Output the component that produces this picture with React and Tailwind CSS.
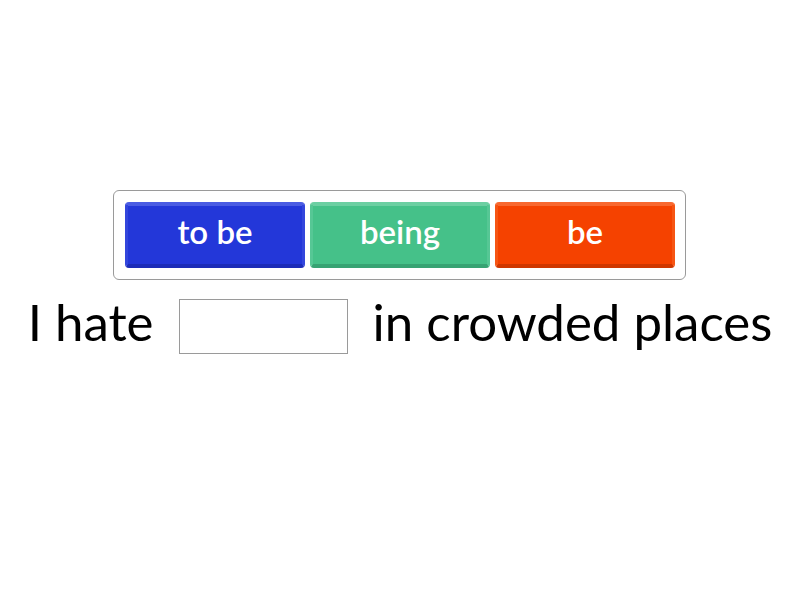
export default function App() {
  const words = [
    { label: 'to be', cls: 'bg-[#2337d9] border-t-[#4a5ce3] border-x-[#3346dc] border-b-[#1c2cb8]' },
    { label: 'being', cls: 'bg-[#45c189] border-t-[#6ccfa2] border-x-[#56c795] border-b-[#37a373]' },
    { label: 'be', cls: 'bg-[#f54200] border-t-[#f8682f] border-x-[#f65514] border-b-[#cf3700]' },
  ]

  return (
    <div className="w-[800px] h-[600px] bg-white flex flex-col items-center pt-[190px]" style={{ fontFamily: 'Lato, "Noto Sans", sans-serif' }}>
      <div className="flex gap-[5px] pt-[11px] pb-[11px] pl-[11px] pr-[10px] border border-[#9a9a9a] rounded-[6px] ml-[-1px]">
        {words.map((w) => (
          <div
            key={w.label}
            className={`w-[180px] h-[66px] rounded-[4px] border-t-[4px] border-x-[3px] border-b-[4px] flex items-center justify-center text-white text-[33px] font-semibold ${w.cls}`}
          >
            <span className="-mt-[6px]">{w.label}</span>
          </div>
        ))}
      </div>
      <div className="flex items-center mt-[19px] text-[51px] text-black leading-none">
        <span className="-mt-[10px]">I hate</span>
        <div className="w-[169px] h-[55px] border border-[#9a9a9a] mx-[25px] bg-white" />
        <span className="-mt-[10px]">in crowded places</span>
      </div>
    </div>
  )
}
